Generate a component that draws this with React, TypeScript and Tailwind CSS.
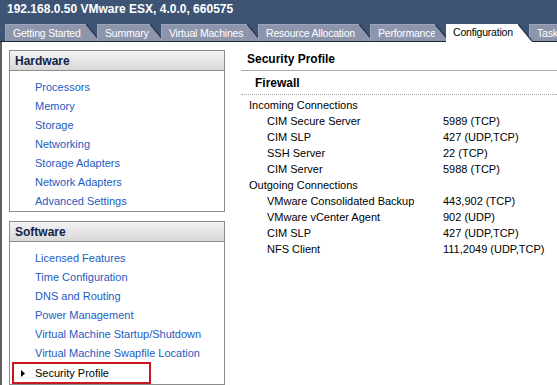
import React from 'react';

const TABS: { label: string; w: number }[] = [
  { label: 'Getting Started', w: 81 },
  { label: 'Summary', w: 53 },
  { label: 'Virtual Machines', w: 86 },
  { label: 'Resource Allocation', w: 101 },
  { label: 'Performance', w: 65 },
  { label: 'Configuration', w: 72 },
  { label: 'Tasks & Events', w: 80 },
];
const ACTIVE = 'Configuration';

const HARDWARE = [
  'Processors',
  'Memory',
  'Storage',
  'Networking',
  'Storage Adapters',
  'Network Adapters',
  'Advanced Settings',
];

const SOFTWARE = [
  'Licensed Features',
  'Time Configuration',
  'DNS and Routing',
  'Power Management',
  'Virtual Machine Startup/Shutdown',
  'Virtual Machine Swapfile Location',
];

const INCOMING: [string, string][] = [
  ['CIM Secure Server', '5989 (TCP)'],
  ['CIM SLP', '427 (UDP,TCP)'],
  ['SSH Server', '22 (TCP)'],
  ['CIM Server', '5988 (TCP)'],
];

const OUTGOING: [string, string][] = [
  ['VMware Consolidated Backup', '443,902 (TCP)'],
  ['VMware vCenter Agent', '902 (UDP)'],
  ['CIM SLP', '427 (UDP,TCP)'],
  ['NFS Client', '111,2049 (UDP,TCP)'],
];

const Tab: React.FC<{ label: string; w: number; first: boolean }> = ({ label, w, first }) => {
  const active = label === ACTIVE;
  const fill = active ? '#ffffff' : '#8d95ad';
  const h = active ? 18 : 17;
  return (
    <div
      className={`flex shrink-0 items-stretch ${first ? 'ml-[5px]' : '-ml-[3px]'} ${
        active ? 'relative z-10 -mb-px h-[18px]' : 'h-[17px]'
      }`}
    >
      <div
        style={{ width: w }}
        className={`flex items-center whitespace-nowrap pl-[7px] text-[10.5px] leading-none tracking-[-0.2px] ${
          active ? 'bg-white pb-px text-black' : 'border-l border-t border-[#9ea5bb] bg-[#8d95ad] pl-[6px] text-white'
        }`}
      >
        {label}
      </div>
      <svg width="14" height={h} className="block shrink-0">
        <polygon points={`0,0 14,17 14,${h} 0,${h}`} fill={fill} />
        <line x1="0" y1="0" x2="14" y2="17" stroke="#27314a" strokeWidth="1.2" />
      </svg>
    </div>
  );
};

const Box: React.FC<{ title: string; className?: string; children: React.ReactNode }> = ({
  title,
  className = '',
  children,
}) => (
  <div className={`w-[216px] border border-[#8c8c8c] bg-white ${className}`}>
    <div className="flex h-[20px] items-center border-b border-[#8c8c8c] bg-gradient-to-b from-[#f3f3f3] to-[#d8d8d8] pl-[5px] text-[12px] font-bold text-[#102448]">
      {title}
    </div>
    {children}
  </div>
);

const Row: React.FC<{ name: string; value?: string; indent?: boolean }> = ({ name, value, indent }) => (
  <div className={`flex h-[16px] items-center ${indent ? 'pl-[26px]' : 'pl-[8px]'}`}>
    <span className={indent ? 'w-[176px] shrink-0' : ''}>{name}</span>
    {value && <span>{value}</span>}
  </div>
);

export default function App() {
  return (
    <div className="flex h-[385px] w-[557px] flex-col overflow-hidden bg-white font-['Liberation_Sans',Arial,sans-serif] text-[11px] text-black">
      {/* title bar with tabs */}
      <div className="flex h-[42px] shrink-0 flex-col bg-[#3d5474]">
        <div className="pl-[7px] pt-[2px] text-[12px] font-bold leading-[14px] text-white">
          192.168.0.50 VMware ESX, 4.0.0, 660575
        </div>
        <div className="mt-auto flex h-[18px] items-start border-b border-[#1c2535]">
          {TABS.map((t, i) => (
            <Tab key={t.label} label={t.label} w={t.w} first={i === 0} />
          ))}
        </div>
      </div>

      <div className="flex min-h-0 flex-1">
        {/* left navigation */}
        <div className="flex w-[225px] shrink-0 flex-col border-l-2 border-[#5e5e5e] pl-[7px] pt-[8px]">
          <Box title="Hardware">
            <ul className="pt-[7px]">
              {HARDWARE.map((item) => (
                <li key={item} className="pl-[25px] leading-[19px] text-[#1d5cc0]">
                  {item}
                </li>
              ))}
            </ul>
          </Box>
          <Box title="Software" className="mt-[9px] flex-1">
            <ul className="pt-[7px]">
              {SOFTWARE.map((item) => (
                <li key={item} className="pl-[25px] leading-[19px] text-[#1d5cc0]">
                  {item}
                </li>
              ))}
              <li className="-mt-[1px] ml-[2px] flex h-[22px] w-[139px] items-center border-2 border-[#c8171e] pl-[7px]">
                <svg width="4" height="7" className="shrink-0">
                  <polygon points="0,0 4,3.5 0,7" fill="#000" />
                </svg>
                <span className="ml-[10px]">Security Profile</span>
              </li>
            </ul>
          </Box>
        </div>

        {/* right content */}
        <div className="flex-1 pl-[16px]">
          <div className="border-b border-[#a8a8a8] pb-[4px] pl-[6px] pt-[10px] text-[12px] font-bold leading-[14px]">
            Security Profile
          </div>
          <div className="border-b border-dotted border-[#a0a0a0] pb-[4px] pl-[14px] pt-[5px] text-[12px] font-bold leading-[14px]">
            Firewall
          </div>
          <div className="mt-[2px]">
            <Row name="Incoming Connections" />
            {INCOMING.map(([n, v], i) => (
              <Row key={'in' + i} name={n} value={v} indent />
            ))}
            <Row name="Outgoing Connections" />
            {OUTGOING.map(([n, v], i) => (
              <Row key={'out' + i} name={n} value={v} indent />
            ))}
          </div>
        </div>
      </div>
    </div>
  );
}
